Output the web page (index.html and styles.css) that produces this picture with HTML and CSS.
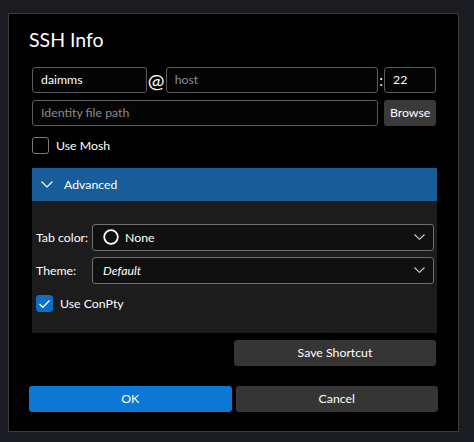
FILE: index.html
```html
<!DOCTYPE html>
<html>
<head>
<meta charset="utf-8">
<link rel="stylesheet" href="styles.css">
</head>
<body>
<div class="dialog">
  <div class="title">SSH Info</div>
  <div class="form">
    <div class="row r1">
      <div class="input user">daimms</div>
      <span class="at">@</span>
      <div class="input host ph">host</div>
      <span class="colon">:</span>
      <div class="input port">22</div>
    </div>
    <div class="row r2">
      <div class="input ident ph">Identity file path</div>
      <div class="btn browse">Browse</div>
    </div>
    <label class="check mosh"><span class="box"></span><span>Use Mosh</span></label>
    <div class="expander">
      <div class="exp-head">
        <svg class="chev" width="12" height="7" viewBox="0 0 12 7"><path d="M0.5 0.5 L6 6 L11.5 0.5" fill="none" stroke="#fff" stroke-width="1.1"/></svg>
        <span>Advanced</span>
      </div>
      <div class="exp-body">
        <div class="field">
          <span class="lbl">Tab color:</span>
          <div class="combo">
            <svg class="circle" width="16" height="16" viewBox="0 0 16 16"><circle cx="8" cy="8" r="6.8" fill="none" stroke="#fff" stroke-width="1.8"/></svg>
            <span class="val">None</span>
            <svg class="cchev" width="11" height="6" viewBox="0 0 11 6"><path d="M0.5 0.5 L5.5 5.3 L10.5 0.5" fill="none" stroke="#cfcfcf" stroke-width="1.1"/></svg>
          </div>
        </div>
        <div class="field">
          <span class="lbl">Theme:</span>
          <div class="combo">
            <span class="val it">Default</span>
            <svg class="cchev" width="11" height="6" viewBox="0 0 11 6"><path d="M0.5 0.5 L5.5 5.3 L10.5 0.5" fill="none" stroke="#cfcfcf" stroke-width="1.1"/></svg>
          </div>
        </div>
        <label class="check conpty"><span class="box on"><svg width="13" height="10" viewBox="0 0 13 10"><path d="M1.5 5 L4.8 8.3 L11.5 1.5" fill="none" stroke="#fff" stroke-width="1.3"/></svg></span><span>Use ConPty</span></label>
      </div>
    </div>
    <div class="save-row"><div class="btn save">Save Shortcut</div></div>
  </div>
  <div class="actions">
    <div class="btn ok">OK</div>
    <div class="btn cancel">Cancel</div>
  </div>
</div>
</body>
</html>
```
FILE: styles.css
```css
* { box-sizing: border-box; }
html, body { margin: 0; padding: 0; }
body {
  width: 474px; height: 442px;
  background: #1b1c22;
  font-family: "Lato", "Open Sans", sans-serif;
  font-size: 12.3px;
  color: #fff;
  overflow: hidden;
  padding: 13px 0 0 8px;
}
.dialog {
  width: 451px; height: 419px;
  background: #000;
  border: 1px solid #3c3c3c;
  padding: 12px 20px 0 20px;
  display: flex; flex-direction: column;
}
.title { font-size: 19.5px; line-height: 28px; height: 28px; }
.form { padding: 0 2px 0 3px; margin-top: 13px; display: flex; flex-direction: column; }
.row { display: flex; align-items: center; height: 26px; }
.r2 { margin-top: 7px; }
.input {
  height: 26px; border: 1px solid #5a5a5a; border-radius: 3px;
  background: #050505; padding: 0 8px; line-height: 24px; color: #fff;
  white-space: nowrap;
}
.ph { color: #8c8c8c; }
.user { width: 115px; }
.at { width: 19px; text-align: center; font-size: 20px; line-height: 26px; }
.host { width: 213px; }
.colon { width: 6px; text-align: center; font-size: 15px; }
.port { width: 52px; }
.ident { width: 347px; }
.btn {
  background: #353535; border-radius: 3px; height: 26px; line-height: 26px;
  text-align: center; color: #fff; white-space: nowrap;
}
.browse { width: 52px; margin-left: 6px; background: #3a3a3a; }
.check { display: flex; align-items: center; gap: 7px; white-space: nowrap; }
.box { width: 17px; height: 17px; border: 1px solid #7a7a7a; border-radius: 3px; display: flex; align-items: center; justify-content: center; }
.box.on { background: #0b6fc4; border-color: #0b6fc4; }
.mosh { margin-top: 11px; height: 17px; }
.expander { margin-top: 14px; width: 405px; }
.exp-head {
  height: 33px; background: #185c99; display: flex; align-items: center;
  padding-left: 9px; gap: 11px;
}
.exp-body { background: #1c1c1c; height: 132px; padding: 23px 3px 0 4px; display: flex; flex-direction: column; }
.field { display: flex; align-items: center; height: 26px; margin-bottom: 7px; }
.lbl { width: 56px; white-space: nowrap; }
.combo {
  flex: 1; height: 27px; background: #101010; border: 1px solid #6e6e6e; border-radius: 3px;
  display: flex; align-items: center; padding: 0 8px 0 10px;
}
.circle { margin-right: 6px; }
.val { flex: 1; }
.it { font-style: italic; }
.conpty { margin-top: 5px; height: 17px; }
.save-row { display: flex; justify-content: flex-end; margin-top: 7px; }
.save { width: 202px; }
.actions { display: flex; gap: 4px; margin-top: 20px; }
.ok { width: 203px; background: #0a78d4; }
.cancel { width: 203px; }
```
